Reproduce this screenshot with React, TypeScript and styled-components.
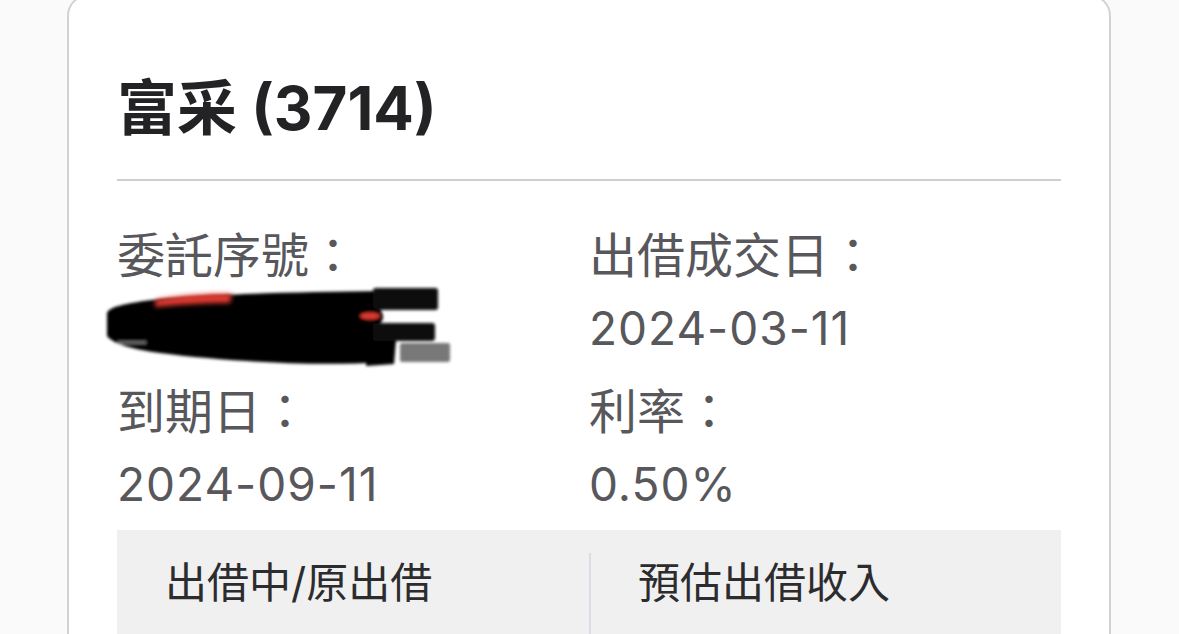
import React from 'react';
import styled, { createGlobalStyle } from 'styled-components';

const GlobalStyle = createGlobalStyle`
  body {
    margin: 0;
    background: #fafafa;
    font-family: Inter, "Noto Sans CJK TC", sans-serif;
    overflow: hidden;
  }
`;

const Card = styled.section`
  box-sizing: border-box;
  width: 1044px;
  height: 720px;
  margin: -6px 0 0 67px;
  padding: 0 48px;
  background: #fff;
  border: 2px solid #d2d2d2;
  border-radius: 22px;
  overflow: hidden;
`;

const Title = styled.h1`
  margin: 76px 0 0;
  font-size: 60px;
  line-height: 72px;
  font-weight: 700;
  color: #232325;
`;

const Divider = styled.hr`
  margin: 35px 0 0;
  border: 0;
  height: 2px;
  background: #cfcfcf;
`;

const InfoGrid = styled.div`
  display: grid;
  grid-template-columns: 1fr 1fr;
  row-gap: 12px;
  margin-top: 39px;
`;

const Field = styled.div`
  display: flex;
  flex-direction: column;
`;

const Label = styled.span`
  font-size: 48px;
  line-height: 72px;
  color: #58585c;
`;

const Value = styled.span`
  font-size: 46px;
  line-height: 72px;
  letter-spacing: 1px;
  color: #58585c;
  height: 72px;
`;

const Redaction = styled.svg`
  display: block;
  margin: -12px 0 0 -17px;
  overflow: visible;
`;

const TableHead = styled.div`
  display: grid;
  grid-template-columns: 1fr 1fr;
  margin-top: 10px;
  padding-top: 23px;
  background: #f0f0f0;
`;

const HeadCell = styled.div<{ $divided?: boolean }>`
  padding-left: ${(p) => (p.$divided ? '47px' : '48px')};
  border-left: ${(p) => (p.$divided ? '2px solid #dcdce4' : '0')};
  height: 110px;
  font-size: 42px;
  line-height: 60px;
  color: #2c2c2e;
`;

// hand-drawn marker scribble hiding the order number
const Scribble = () => (
  <Redaction width="360" height="95" viewBox="0 0 360 95">
    <defs>
      <filter id="soft" x="-10%" y="-20%" width="120%" height="140%">
        <feGaussianBlur stdDeviation="1.5" />
      </filter>
      <filter id="softer" x="-20%" y="-50%" width="140%" height="200%">
        <feGaussianBlur stdDeviation="2.5" />
      </filter>
    </defs>
    <g filter="url(#soft)">
      <path
        d="M7,33 C9,27 24,24 44,21 C100,14 200,12 280,11 L280,30 C284,34 284,40 280,43 L282,82 C220,87 120,81 60,73 C30,69 12,63 7,56 Z"
        fill="#040404"
      />
      <path d="M268,58 L296,60 L294,84 L266,86 Z" fill="#060606" />
      <path d="M18,61 L46,61 L46,64 L18,64 Z" fill="#666" />
      <rect x="273" y="8" width="65" height="22" rx="3" fill="#070707" />
      <rect x="273" y="43" width="62" height="18" rx="3" fill="#0a0a0a" />
      <rect x="300" y="63" width="50" height="19" rx="2" fill="#555" opacity="0.8" />
      <ellipse cx="270" cy="36" rx="10" ry="3.5" fill="#d8382e" />
    </g>
    <path
      d="M55,20 C80,15 110,13 132,14 L130,23 C100,23 76,25 55,27 Z"
      fill="#e63b31"
      filter="url(#softer)"
    />
  </Redaction>
);

const App: React.FC = () => (
  <>
    <GlobalStyle />
    <Card>
      <Title>富采 (3714)</Title>
      <Divider />
      <InfoGrid>
        <Field>
          <Label>委託序號：</Label>
          <Value>
            <Scribble />
          </Value>
        </Field>
        <Field>
          <Label>出借成交日：</Label>
          <Value>2024-03-11</Value>
        </Field>
        <Field>
          <Label>到期日：</Label>
          <Value>2024-09-11</Value>
        </Field>
        <Field>
          <Label>利率：</Label>
          <Value>0.50%</Value>
        </Field>
      </InfoGrid>
      <TableHead>
        <HeadCell>出借中/原出借</HeadCell>
        <HeadCell $divided>預估出借收入</HeadCell>
      </TableHead>
    </Card>
  </>
);

export default App;
